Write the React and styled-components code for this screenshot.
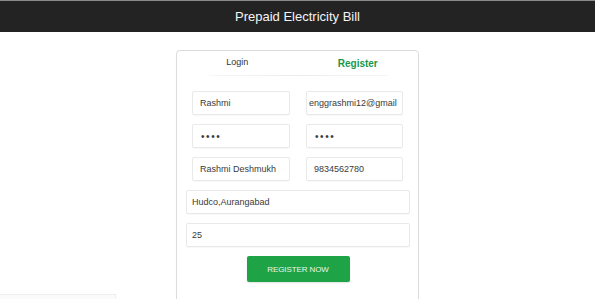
import React from "react";
import styled, { createGlobalStyle } from "styled-components";

const GlobalStyle = createGlobalStyle`
  html, body {
    margin: 0;
    padding: 0;
    background: #ffffff;
    font-family: "Liberation Sans", Arial, sans-serif;
  }
`;

const Page = styled.div`
  width: 595px;
  height: 299px;
  overflow: hidden;
  position: relative;
`;

const Header = styled.header`
  height: 32px;
  background: #232323;
  border-top: 1px solid #8a8a8a;
  box-sizing: border-box;
  display: flex;
  align-items: center;
  justify-content: center;
  color: #f4f4f4;
  font-size: 13px;
`;

const Main = styled.main`
  display: flex;
  justify-content: center;
  padding-top: 18px;
`;

const Card = styled.div`
  width: 243px;
  height: 270px;
  box-sizing: border-box;
  border: 1px solid #dcdcdc;
  border-radius: 4px;
  box-shadow: 0 1px 2px rgba(0, 0, 0, 0.04);
`;

const Tabs = styled.div`
  display: grid;
  grid-template-columns: 1fr 1fr;
  height: 24px;
`;

const Tab = styled.div`
  display: flex;
  align-items: center;
  justify-content: center;
  font-size: ${(p) => (p.$active ? "10px" : "9px")};
  font-weight: ${(p) => (p.$active ? 700 : 400)};
  color: ${(p) => (p.$active ? "#16994a" : "#333333")};
  padding-top: ${(p) => (p.$active ? "1px" : "0")};
  padding-bottom: ${(p) => (p.$active ? "0" : "2px")};
`;

const Divider = styled.div`
  height: 1px;
  margin: 0 30px 0 32px;
  background: linear-gradient(to right, #f6f6f6, #ececec 50%, #f6f6f6);
`;

const Form = styled.form`
  display: flex;
  flex-direction: column;
  gap: 9px;
  padding: 15px 8px 0 9px;
`;

const Pair = styled.div`
  display: grid;
  grid-template-columns: 98px 97px;
  justify-content: space-between;
  padding: 0 7px 0 6px;
`;

const Field = styled.input`
  height: 24px;
  box-sizing: border-box;
  width: 100%;
  border: 1px solid #e9e9e9;
  border-radius: 2px;
  box-shadow: 0 1px 1px rgba(0, 0, 0, 0.03);
  padding: 0 5px 0 ${(p) => p.$inset || "7px"};
  font-family: "Liberation Sans", Arial, sans-serif;
  font-size: 9px;
  color: #3a3a3a;
  background: #ffffff;
  outline: none;

  &[type="password"] {
    font-size: 10px;
    letter-spacing: 1.6px;
    padding-left: 8px;
  }
`;

const Button = styled.button`
  align-self: center;
  width: 103px;
  height: 26px;
  border: none;
  border-radius: 2px;
  background: #1fa347;
  color: #e9f6ec;
  font-family: "Liberation Sans", Arial, sans-serif;
  font-size: 8px;
  letter-spacing: -0.1px;
  box-shadow: 0 1px 2px rgba(0, 0, 0, 0.12);
`;

const StatusHint = styled.div`
  position: absolute;
  left: 0;
  bottom: 0;
  width: 115px;
  height: 4px;
  border-top: 1px solid #eeeeee;
  border-right: 1px solid #eeeeee;
  background: #fafafa;
`;

export default function App() {
  return (
    <Page>
      <GlobalStyle />
      <Header>Prepaid Electricity Bill</Header>
      <Main>
        <Card>
          <Tabs>
            <Tab>Login</Tab>
            <Tab $active>Register</Tab>
          </Tabs>
          <Divider />
          <Form onSubmit={(e) => e.preventDefault()}>
            <Pair>
              <Field defaultValue="Rashmi" />
              <Field $inset="2px" defaultValue="enggrashmi12@gmail" />
            </Pair>
            <Pair>
              <Field type="password" defaultValue="1234" />
              <Field type="password" defaultValue="1234" />
            </Pair>
            <Pair>
              <Field defaultValue="Rashmi Deshmukh" />
              <Field defaultValue="9834562780" />
            </Pair>
            <Field $inset="5px" defaultValue="Hudco,Aurangabad" />
            <Field $inset="5px" defaultValue="25" />
            <Button type="submit">REGISTER NOW</Button>
          </Form>
        </Card>
      </Main>
      <StatusHint />
    </Page>
  );
}
